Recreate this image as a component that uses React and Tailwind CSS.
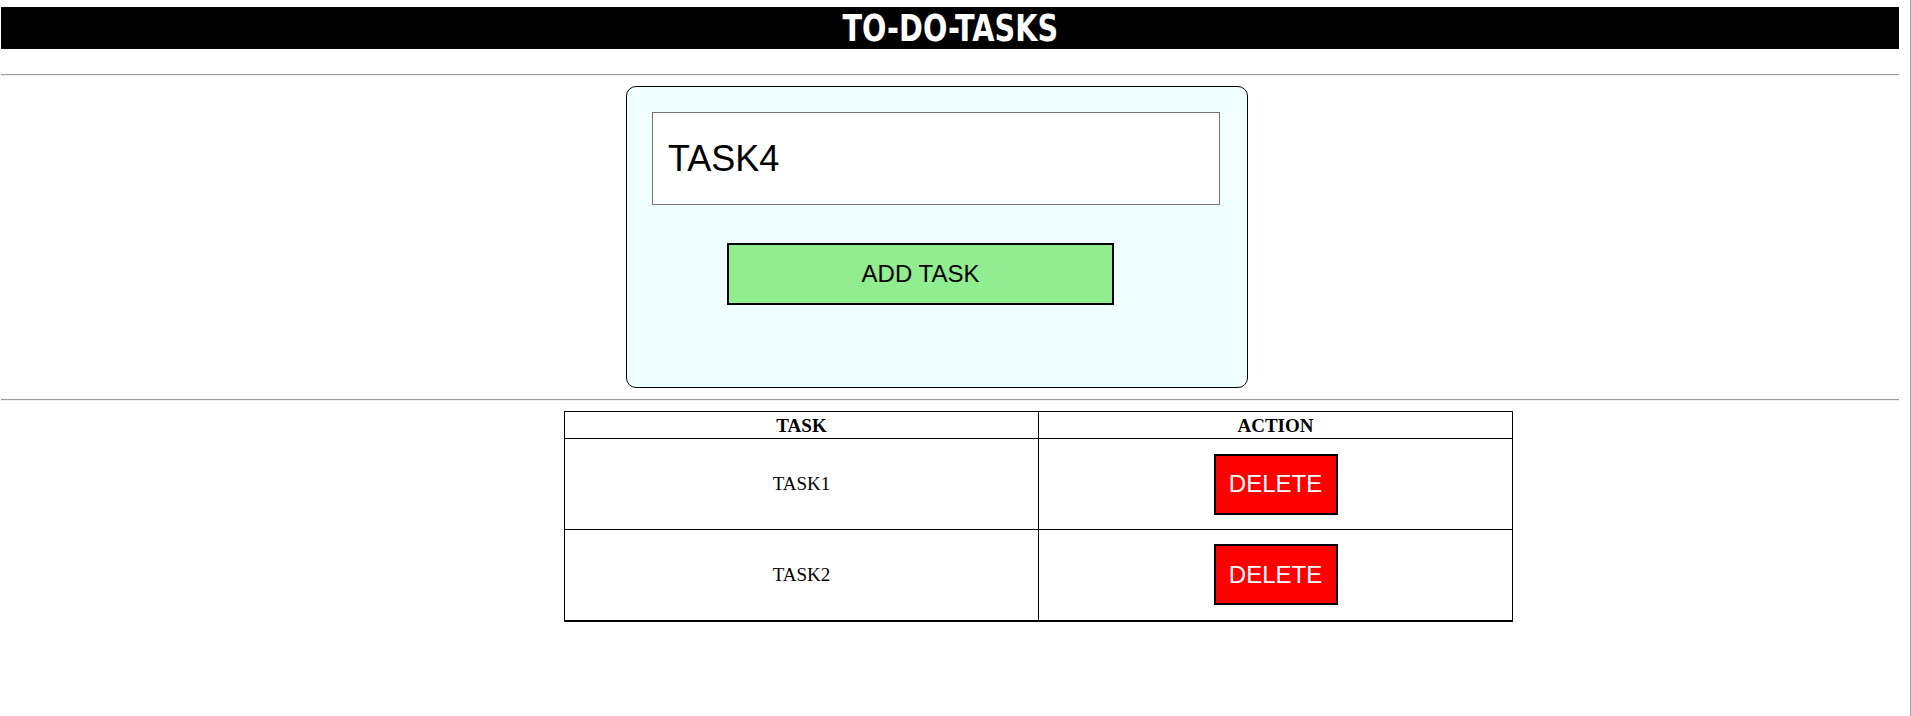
export default function App() {
  const tasks = ["TASK1", "TASK2"];
  return (
    <div className="flex min-h-[716px] w-full bg-white font-['Liberation_Sans',Arial,sans-serif] text-black">
      <div className="ml-px w-[1898px] shrink-0 pt-[7px]">
        <div className="flex h-[42px] items-center justify-center bg-black">
          <h1 className="scale-x-[0.84] font-['Liberation_Sans_Narrow','DejaVu_Sans_Condensed',sans-serif] text-[38px] font-bold leading-none text-white">
            TO-DO-TASKS
          </h1>
        </div>
        <div className="mt-[25px] h-[2px] border-t border-b border-t-[#9a9a9a] border-b-[#eeeeee]"></div>
        <div className="mt-[10px] ml-[625px] box-border h-[302px] w-[622px] rounded-[10px] border border-black bg-[#f0ffff] pl-[25px] pt-[25px]">
          <input
            type="text"
            defaultValue="TASK4"
            className="box-border block h-[93px] w-[568px] border border-[#767676] bg-white px-[15px] font-['Liberation_Sans',Arial,sans-serif] text-[36px] text-black outline-none"
          />
          <button className="mt-[38px] ml-[75px] box-border block h-[62px] w-[387px] border-2 border-black bg-[#90ee90] font-['Liberation_Sans',Arial,sans-serif] text-[24px] text-black">
            ADD TASK
          </button>
        </div>
        <div className="mt-[11px] h-[2px] border-t border-b border-t-[#9a9a9a] border-b-[#eeeeee]"></div>
        <table className="mt-[10px] ml-[563px] w-[949px] border-collapse font-['Liberation_Serif','Times_New_Roman',serif] text-[19px]">
          <thead>
            <tr>
              <th className="h-[27px] w-1/2 border border-black p-0 text-center font-bold leading-none">TASK</th>
              <th className="h-[27px] w-1/2 border border-black p-0 text-center font-bold leading-none">ACTION</th>
            </tr>
          </thead>
          <tbody>
            {tasks.map((t, i) => (
              <tr key={t}>
                <td className={`h-[91px] border border-black p-0 text-center ${i === tasks.length - 1 ? "border-b-2" : ""}`}>
                  {t}
                </td>
                <td className={`h-[91px] border border-black p-0 text-center ${i === tasks.length - 1 ? "border-b-2" : ""}`}>
                  <button className="mx-auto box-border block h-[61px] w-[124px] border-2 border-black bg-[#ff0000] font-['Liberation_Sans',Arial,sans-serif] text-[24px] text-white">
                    DELETE
                  </button>
                </td>
              </tr>
            ))}
          </tbody>
        </table>
      </div>
      <div className="flex-1"></div>
      <div className="w-px shrink-0 self-stretch bg-[#a9a9a9]"></div>
    </div>
  );
}
